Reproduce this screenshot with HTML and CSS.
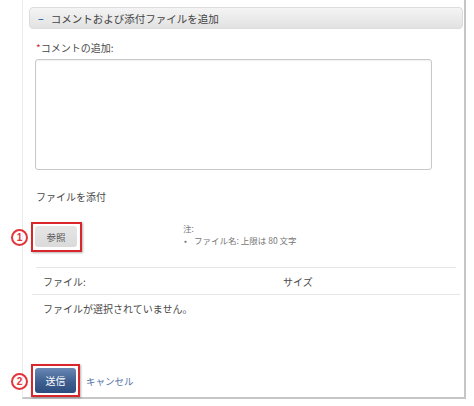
FILE: index.html
```html
<!DOCTYPE html>
<html lang="ja">
<head>
<meta charset="utf-8">
<link rel="stylesheet" href="styles.css">
</head>
<body>
<div class="panel">
  <div class="header"><span class="minus">–</span>コメントおよび添付ファイルを追加</div>
  <div class="content">
    <div class="label"><span class="req">*</span>コメントの追加:</div>
    <div class="textarea"></div>
    <div class="section">ファイルを添付</div>
    <div class="browse-row">
      <div class="redbox small">
        <span class="num">1</span>
        <div class="btn-grey">参照</div>
      </div>
      <div class="notes">
        <div class="note-title">注:</div>
        <div class="note-item"><span class="bullet">•</span>ファイル名: 上限は 80 文字</div>
      </div>
    </div>
    <div class="table">
      <div class="thead">
        <div class="col1">ファイル:</div>
        <div class="col2">サイズ</div>
      </div>
      <div class="empty">ファイルが選択されていません。</div>
    </div>
    <div class="actions">
      <div class="redbox big">
        <span class="num">2</span>
        <div class="btn-blue">送信</div>
      </div>
      <span class="cancel">キャンセル</span>
    </div>
  </div>
</div>
</body>
</html>
```
FILE: styles.css
```css
html, body {
  margin: 0;
  padding: 0;
  background: #ffffff;
}
body {
  font-family: "Noto Sans CJK JP", "Noto Sans", sans-serif;
  font-size: 10px;
  color: #4a4a4a;
  width: 474px;
  height: 406px;
  overflow: hidden;
}
.panel {
  margin-left: 22px;
  width: 444px;
  border-left: 1px solid #ececec;
  border-right: 2px solid #c6c6c6;
  border-bottom: 2px solid #c6c6c6;
  padding: 7px 0 0 6px;
  box-sizing: border-box;
  height: 399px;
}
.header {
  height: 22px;
  width: 434px;
  box-sizing: border-box;
  border: 1px solid #dcdcdc;
  border-radius: 4px;
  background: linear-gradient(#f4f4f4, #e2e2e2);
  display: flex;
  align-items: center;
  padding-left: 8px;
  font-size: 10.5px;
  color: #444;
}
.minus {
  color: #3a6ea8;
  font-weight: bold;
  margin-right: 7px;
}
.content {
  padding-left: 6px;
}
.label {
  margin-top: 12px;
  line-height: 14px;
  padding-left: 1px;
}
.req {
  color: #d03030;
}
.textarea {
  margin-top: 4px;
  width: 397px;
  height: 111px;
  box-sizing: border-box;
  border: 1px solid #c8c8c8;
  border-radius: 3px;
  box-shadow: inset 0 1px 2px rgba(0,0,0,0.06);
}
.section {
  margin-top: 20px;
  line-height: 14px;
  padding-left: 1px;
}
.browse-row {
  margin-top: 18px;
  display: flex;
  align-items: flex-start;
}
.redbox {
  position: relative;
  border: 2px solid #d9262a;
  box-shadow: 1px 1px 2px rgba(0,0,0,0.3);
  margin-left: -4px;
  padding: 2px;
}
.redbox.small {
  padding: 2px 3px 3px 2px;
}
.num {
  position: absolute;
  left: -22px;
  top: 50%;
  margin-top: -8px;
  width: 13px;
  height: 13px;
  border: 2px solid #e2343a;
  border-radius: 50%;
  color: #e2343a;
  font-family: "Liberation Sans", sans-serif;
  font-weight: bold;
  font-size: 10px;
  line-height: 13px;
  text-align: center;
}
.btn-grey {
  width: 42px;
  height: 21px;
  background: linear-gradient(#e6e6e6, #dadada);
  border-radius: 3px;
  color: #555;
  font-size: 9.5px;
  display: flex;
  align-items: center;
  justify-content: center;
}
.notes {
  margin-left: 101px;
  margin-top: 0;
  color: #777;
  font-size: 8.5px;
  line-height: 12px;
}
.note-item {
  display: flex;
}
.bullet {
  width: 10px;
  padding-left: 1px;
}
.table {
  margin-top: 15px;
  margin-left: 1px;
}
.thead {
  display: flex;
  width: 420px;
  height: 26px;
  border-top: 1px solid #e6e6e6;
  align-items: center;
  position: relative;
}
.thead::after {
  content: "";
  position: absolute;
  left: -4px;
  right: -4px;
  bottom: -1px;
  border-bottom: 1px solid #e6e6e6;
}
.col1 {
  width: 240px;
  padding-left: 7px;
}
.empty {
  margin-top: 8px;
  line-height: 14px;
  padding-left: 7px;
}
.actions {
  margin-top: 48px;
  display: flex;
  align-items: center;
}
.btn-blue {
  width: 41px;
  height: 25px;
  border-radius: 3px;
  background: linear-gradient(#6a88b4, #3e5f90 55%, #2d4d7e);
  color: #fff;
  font-size: 10px;
  display: flex;
  align-items: center;
  justify-content: center;
}
.cancel {
  margin-left: 6px;
  color: #5673aa;
  font-size: 9.5px;
}
```
